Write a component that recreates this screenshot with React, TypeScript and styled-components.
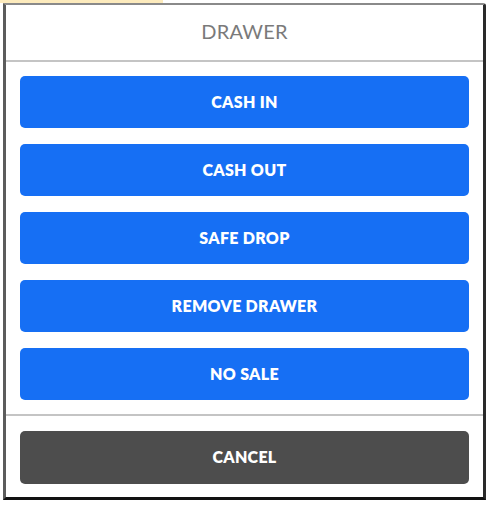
import React from "react";
import styled, { createGlobalStyle } from "styled-components";

const Global = createGlobalStyle`
  html, body { margin: 0; padding: 0; background: #ffffff; }
  body { font-family: "Lato", "Open Sans", sans-serif; }
`;

const Page = styled.div`
  width: 490px;
  height: 506px;
  background: #ffffff;
`;

const TopStrip = styled.div`
  width: 163px;
  height: 3px;
  background: #fdebbd;
`;

const Modal = styled.div`
  margin: 0 4px 0 3px;
  height: 497px;
  box-sizing: border-box;
  background: #ffffff;
  border-top: 2px solid #8a8a8a;
  border-left: 3px solid #5c5c5c;
  border-right: 3px solid #2a2a2a;
  border-bottom: 3px solid #111111;
  border-top-right-radius: 3px;
  display: flex;
  flex-direction: column;
`;

const Header = styled.div`
  height: 57px;
  box-sizing: border-box;
  padding-bottom: 4px;
  display: flex;
  align-items: center;
  justify-content: center;
  font-family: "Lato", sans-serif;
  font-size: 20px;
  color: #7a7a7a;
  letter-spacing: 0.2px;
  border-bottom: 2px solid #c4c4c4;
`;

const ActionList = styled.div`
  display: flex;
  flex-direction: column;
  gap: 16px;
  padding: 14px 14px 14px;
  border-bottom: 2px solid #c4c4c4;
`;

const Footer = styled.div`
  padding: 15px 14px 0;
`;

const ActionButton = styled.button<{ $tone?: "primary" | "dark" }>`
  display: flex;
  align-items: center;
  justify-content: center;
  width: 100%;
  height: ${(p) => (p.$tone === "dark" ? "53px" : "52px")};
  border: none;
  border-radius: 5px;
  background: ${(p) => (p.$tone === "dark" ? "#4d4d4d" : "#166ff4")};
  color: #ffffff;
  font-family: "Lato", sans-serif;
  font-weight: 800;
  font-size: 16px;
  letter-spacing: 0.3px;
  cursor: pointer;
  padding: 0 0 2px;
`;

const actions = ["CASH IN", "CASH OUT", "SAFE DROP", "REMOVE DRAWER", "NO SALE"];

export default function App() {
  return (
    <>
      <Global />
      <Page>
        <TopStrip />
        <Modal>
          <Header>DRAWER</Header>
          <ActionList>
            {actions.map((a) => (
              <ActionButton key={a}>{a}</ActionButton>
            ))}
          </ActionList>
          <Footer>
            <ActionButton $tone="dark">CANCEL</ActionButton>
          </Footer>
        </Modal>
      </Page>
    </>
  );
}
